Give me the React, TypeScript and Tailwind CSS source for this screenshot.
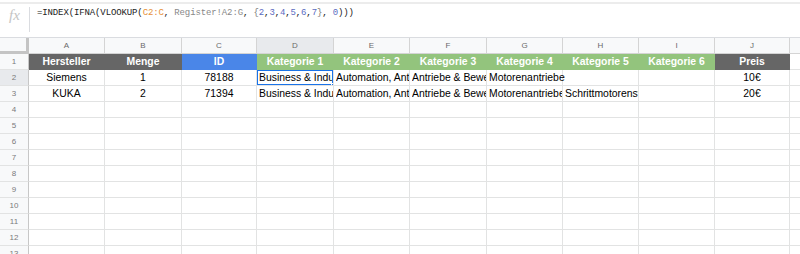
import React from "react";

const cols = ["A", "B", "C", "D", "E", "F", "G", "H", "I", "J"];
const widths = [
  "w-[76px]",
  "w-[77px]",
  "w-[75px]",
  "w-[77px]",
  "w-[76px]",
  "w-[77px]",
  "w-[76px]",
  "w-[76px]",
  "w-[76px]",
  "w-[75px]",
];

type HeaderCell = { text: string; bg: string };
const headerRow: HeaderCell[] = [
  { text: "Hersteller", bg: "bg-[#666666] border-[#666666]" },
  { text: "Menge", bg: "bg-[#666666] border-[#666666]" },
  { text: "ID", bg: "bg-[#4a86e8] border-[#4a86e8]" },
  { text: "Kategorie 1", bg: "bg-[#93c47d] border-[#93c47d]" },
  { text: "Kategorie 2", bg: "bg-[#93c47d] border-[#93c47d]" },
  { text: "Kategorie 3", bg: "bg-[#93c47d] border-[#93c47d]" },
  { text: "Kategorie 4", bg: "bg-[#93c47d] border-[#93c47d]" },
  { text: "Kategorie 5", bg: "bg-[#93c47d] border-[#93c47d]" },
  { text: "Kategorie 6", bg: "bg-[#93c47d] border-[#93c47d]" },
  { text: "Preis", bg: "bg-[#666666] border-[#666666]" },
];

type Cell = { text: string; align: "c" | "l" };
const dataRows: Cell[][] = [
  [
    { text: "Siemens", align: "c" },
    { text: "1", align: "c" },
    { text: "78188", align: "c" },
    { text: "Business & Industrie", align: "l" },
    { text: "Automation, Antriebe", align: "l" },
    { text: "Antriebe & Bewegung", align: "l" },
    { text: "Motorenantriebe", align: "l" },
    { text: "", align: "l" },
    { text: "", align: "l" },
    { text: "10€", align: "c" },
  ],
  [
    { text: "KUKA", align: "c" },
    { text: "2", align: "c" },
    { text: "71394", align: "c" },
    { text: "Business & Industrie", align: "l" },
    { text: "Automation, Antriebe", align: "l" },
    { text: "Antriebe & Bewegung", align: "l" },
    { text: "Motorenantriebe", align: "l" },
    { text: "Schrittmotorensteuerung", align: "l" },
    { text: "", align: "l" },
    { text: "20€", align: "c" },
  ],
];

const font = { fontFamily: '"Liberation Sans", Arial, sans-serif' };

function RowHead({ n, active }: { n: number; active?: boolean }) {
  return (
    <div
      className={`w-[29px] shrink-0 h-[16px] flex items-center justify-center text-[8px] text-[#7a7a7a] border-b border-[#e2e3e3] border-r border-r-[#c7c7c7] ${
        active ? "bg-[#e8eaed]" : "bg-[#f8f9fa]"
      }`}
    >
      {n}
    </div>
  );
}

export default function App() {
  const emptyRows = [4, 5, 6, 7, 8, 9, 10, 11, 12, 13];
  return (
    <div className="w-[800px] h-[254px] overflow-hidden bg-white" style={font}>
      {/* formula bar */}
      <div className="h-[36px] mt-[2px] border-t-2 border-[#ececec] border-b border-b-[#dadce0] flex">
        <div className="w-[29px] shrink-0 flex justify-center pt-[4px]">
          <span
            className="text-[15px] italic text-[#c4c4c4] leading-none"
            style={{ fontFamily: '"Liberation Serif", serif' }}
          >
            fx
          </span>
        </div>
        <div className="w-px bg-[#dadce0] mt-[3px] mb-[5px]" />
        <div
          className="pl-[7px] pt-[3px] text-[9px] tracking-[-0.12px] text-[#222] leading-[12px] whitespace-pre"
          style={{ fontFamily: '"Liberation Mono", monospace' }}
        >
          =INDEX(IFNA(VLOOKUP(<span className="text-[#e69138]">C2:C</span>, <span className="text-[#888]">Register!A2:G</span>,{" "}
          <span className="text-[#777]">{"{"}</span>
          <span className="text-[#5b6bbf]">2</span>,<span className="text-[#5b6bbf]">3</span>,
          <span className="text-[#5b6bbf]">4</span>,<span className="text-[#5b6bbf]">5</span>,
          <span className="text-[#5b6bbf]">6</span>,<span className="text-[#5b6bbf]">7</span>
          <span className="text-[#777]">{"}"}</span>, <span className="text-[#5b6bbf]">0</span>)))
        </div>
      </div>

      {/* column header row */}
      <div className="flex h-[16px]">
        <div className="w-[29px] shrink-0 bg-[#f8f9fa] border-r-[3px] border-b-[3px] border-[#c4c4c4]" />
        {cols.map((c, i) => (
          <div
            key={c}
            className={`${widths[i]} shrink-0 flex items-center justify-center text-[8px] text-[#6a6a6a] border-r border-b border-[#d4d4d4] ${
              c === "D" ? "bg-[#e8eaed]" : "bg-[#f8f9fa]"
            }`}
          >
            {c}
          </div>
        ))}
        <div className="flex-1 bg-[#f8f9fa] border-b border-[#d4d4d4]" />
      </div>

      {/* row 1 */}
      <div className="flex h-[16px]">
        <RowHead n={1} />
        {headerRow.map((h, i) => (
          <div
            key={h.text}
            className={`${widths[i]} shrink-0 flex items-center justify-center text-[10.4px] font-bold text-white border-r border-b ${h.bg}`}
          >
            {h.text}
          </div>
        ))}
        <div className="flex-1 border-b border-[#e2e3e3]" />
      </div>

      {/* data rows */}
      {dataRows.map((row, ri) => (
        <div key={ri} className="flex h-[16px]">
          <RowHead n={ri + 2} active={ri === 0} />
          {row.map((cell, ci) => {
            const selected = ri === 0 && ci === 3;
            const spill = ri === 0 && ci === 6;
            return (
              <div
                key={ci}
                className={`relative ${widths[ci]} shrink-0 border-r border-b border-[#e2e3e3] text-[10.4px] text-black flex items-center ${
                  cell.align === "c" ? "justify-center" : "justify-start pl-[2px]"
                } whitespace-nowrap ${spill ? "overflow-visible z-10" : "overflow-hidden"}`}
              >
                {cell.text && (
                  <span
                    className={`block whitespace-nowrap ${
                      spill ? "" : cell.align === "l" ? "w-full overflow-hidden" : ""
                    }`}
                  >
                    {cell.text}
                  </span>
                )}
                {selected && (
                  <>
                    <div className="absolute -left-px -top-px -right-px -bottom-px border-2 border-[#1a73e8] pointer-events-none" />
                    <div className="absolute -right-[3px] -bottom-[3px] w-[5px] h-[5px] bg-[#1a73e8] border border-white" />
                  </>
                )}
              </div>
            );
          })}
          <div className="flex-1 border-b border-[#e2e3e3]" />
        </div>
      ))}

      {emptyRows.map((n) => (
        <div key={n} className="flex h-[16px]">
          <RowHead n={n} />
          {cols.map((c, i) => (
            <div key={c} className={`${widths[i]} shrink-0 border-r border-b border-[#e2e3e3]`} />
          ))}
          <div className="flex-1 border-b border-[#e2e3e3]" />
        </div>
      ))}
    </div>
  );
}
